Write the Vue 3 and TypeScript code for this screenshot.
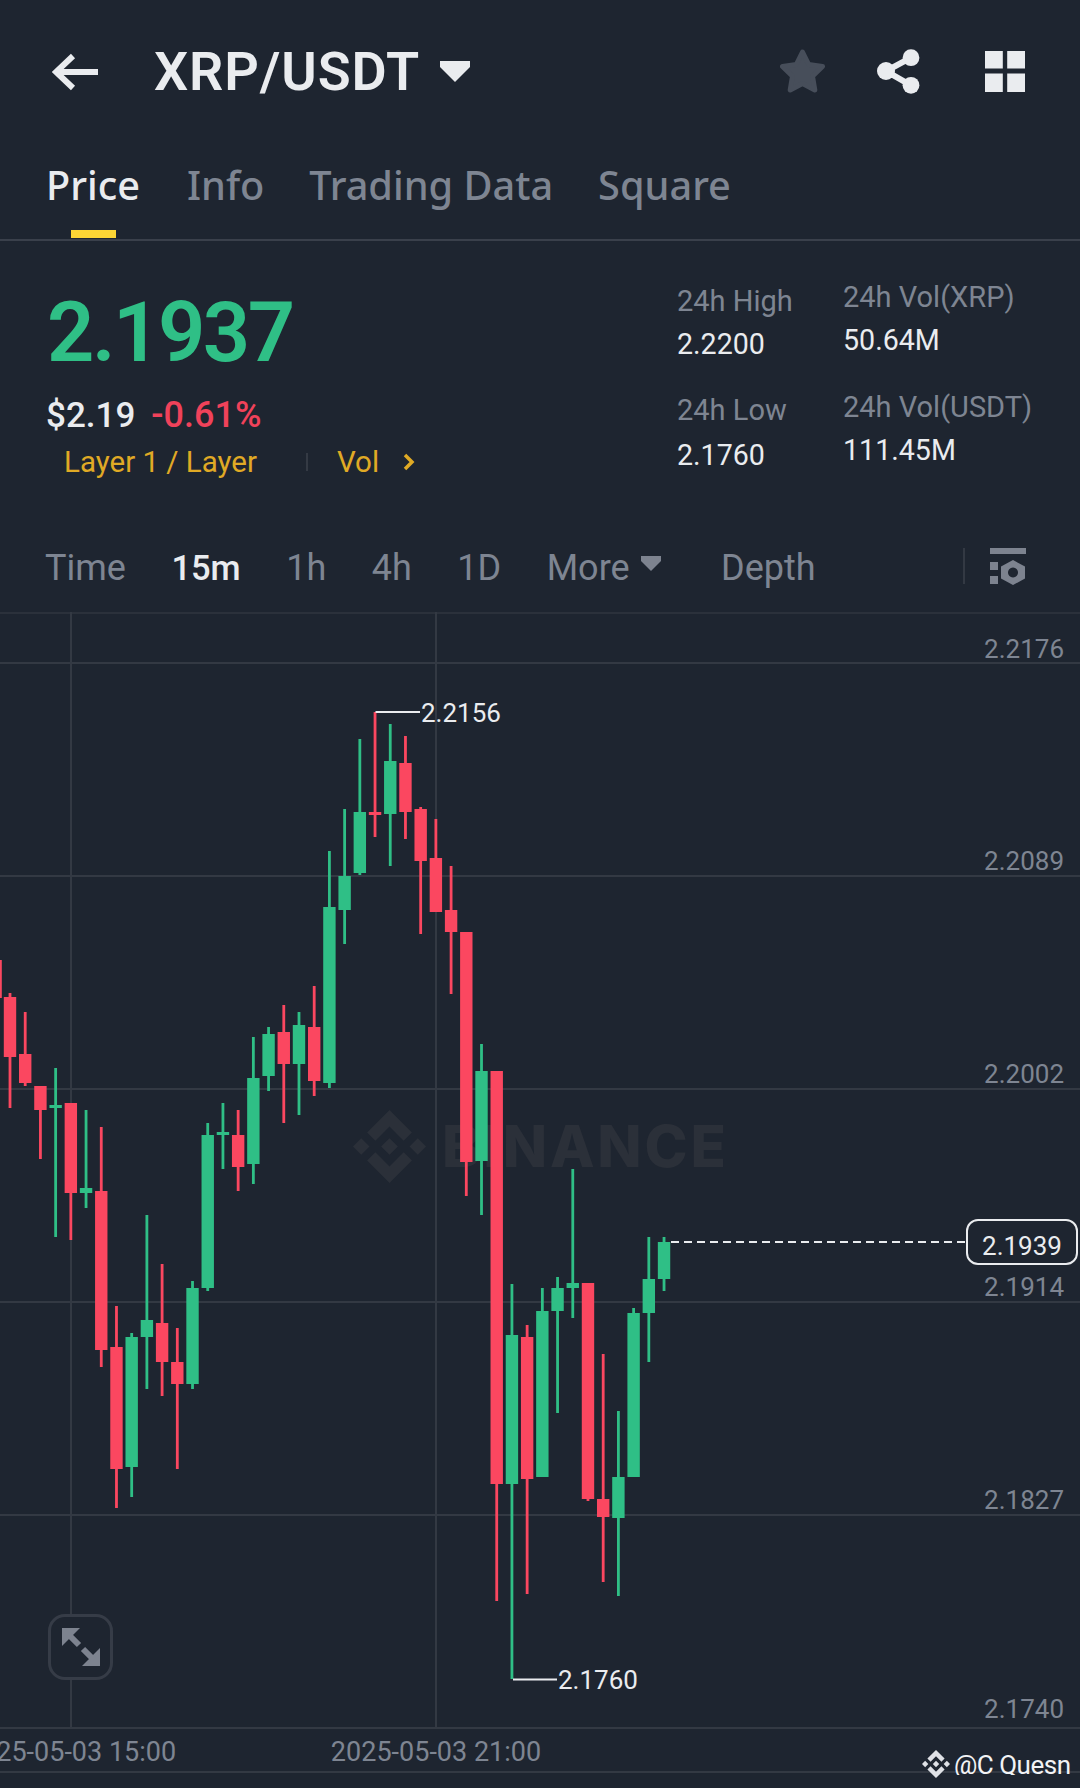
<script setup lang="ts">
type Candle = [number, number, number, number, number];

const GREEN = '#2fbf86';
const RED = '#fb4760';
const STEP = 15.21;
const TOP = 612;

// colour flag (1 green, 0 red), wick top, body top, body bottom, wick bottom
const raw: Candle[] = [
  [0, 993, 997, 1057, 1108], [0, 1012, 1054, 1083, 1086], [0, 1086, 1086, 1110, 1159],
  [1, 1068, 1105, 1108, 1237], [0, 1103, 1103, 1193, 1240], [1, 1110, 1188, 1193, 1208],
  [0, 1127, 1191, 1350, 1367], [0, 1306, 1347, 1469, 1508], [1, 1333, 1337, 1467, 1497],
  [1, 1215, 1320, 1337, 1389], [0, 1264, 1323, 1362, 1396], [0, 1328, 1362, 1384, 1469],
  [1, 1281, 1288, 1384, 1389], [1, 1123, 1135, 1288, 1291], [1, 1103, 1132, 1135, 1169],
  [0, 1110, 1135, 1167, 1191], [1, 1037, 1078, 1164, 1184], [1, 1027, 1034, 1076, 1091],
  [0, 1005, 1032, 1064, 1123], [1, 1012, 1025, 1064, 1115], [0, 986, 1027, 1081, 1096],
  [1, 851, 907, 1083, 1088], [1, 809, 876, 910, 944], [1, 739, 812, 873, 875],
  [0, 712, 812, 815, 837], [1, 724, 761, 814, 866], [0, 736, 763, 812, 839],
  [0, 807, 809, 861, 934], [0, 819, 858, 912, 912], [0, 866, 910, 932, 994],
  [0, 932, 932, 1162, 1196], [1, 1044, 1071, 1161, 1215], [0, 1071, 1071, 1484, 1601],
  [1, 1284, 1335, 1484, 1679], [0, 1325, 1337, 1479, 1594], [1, 1288, 1311, 1477, 1477],
  [1, 1277, 1288, 1311, 1413], [1, 1169, 1283, 1288, 1318], [0, 1283, 1283, 1499, 1501],
  [0, 1354, 1499, 1517, 1582], [1, 1411, 1477, 1518, 1596], [1, 1308, 1313, 1477, 1477],
  [1, 1237, 1279, 1313, 1362], [1, 1237, 1242, 1279, 1291],
];

const candles = raw.map((c, i) => ({
  x: 10 + STEP * i,
  color: c[0] ? GREEN : RED,
  wickTop: c[1],
  bodyTop: c[2],
  bodyHeight: c[3] - c[2],
  wickHeight: c[4] - c[1],
}));

const gridY = [663, 876, 1089, 1302, 1515];
const gridX = [71, 436];

const axisLabels = [
  { text: '2.2176', y: 648 },
  { text: '2.2089', y: 860 },
  { text: '2.2002', y: 1073 },
  { text: '2.1914', y: 1286 },
  { text: '2.1827', y: 1499 },
  { text: '2.1740', y: 1708 },
].map((l) => ({ text: l.text, top: l.y - TOP - 17 }));

const dates = [
  { text: '2025-05-03 15:00', x: 71 },
  { text: '2025-05-03 21:00', x: 436 },
];

const intervals = ['1h', '4h', '1D'];
const tabs = ['Info', 'Trading Data', 'Square'];
const logoPath =
  'M38.73 53.2l24.59-24.58 24.6 24.6 14.3-14.31L63.32 0 24.43 38.9l14.3 14.3zM0 63.31l14.3-14.31 14.31 14.31-14.31 14.3zM38.73 73.41l24.59 24.59 24.6-24.6 14.31 14.29-38.9 38.91-38.91-38.88v-.03l14.31-14.28zM98.03 63.31l14.3-14.3 14.3 14.3-14.3 14.3zM77.83 63.3h.01L63.32 48.78 52.59 59.51l-1.23 1.23-2.54 2.54v.02l14.5 14.52 14.51-14.52.01-.01z';
</script>

<template>
  <div class="page">
    <header class="topbar">
      <svg class="back" width="47" height="38" viewBox="0 0 47 38" fill="none" stroke="#eaecef" stroke-width="6">
        <path d="M46 19H5M21 3L4 19l17 16" />
      </svg>
      <h1 class="pair">XRP/USDT</h1>
      <svg class="pair-caret" width="30" height="21" viewBox="0 0 30 21"><path d="M0 0h30v6L15 21 0 6z" fill="#eaecef" /></svg>
      <svg class="star" width="45" height="46" viewBox="0 0 45 46">
        <path d="M22.500 4l6.200 12.500 13.800 2-10 9.700L34.800 42l-12.300-6.500L10.200 42l2.300-13.800-10-9.700 13.800-2z" fill="#474e5a" stroke="#474e5a" stroke-width="5" stroke-linejoin="round" />
      </svg>
      <svg class="share" width="43" height="45" viewBox="0 0 43 45" fill="#eaecef" stroke="#eaecef">
        <path d="M34 8.700L9 22l25 14.300" fill="none" stroke-width="6" />
        <circle cx="34" cy="8.700" r="8.400" stroke="none" />
        <circle cx="9" cy="22" r="9" stroke="none" />
        <circle cx="34" cy="36.300" r="8.400" stroke="none" />
      </svg>
      <svg class="grid-icon" width="40" height="41" viewBox="0 0 40 41" fill="#eaecef">
        <rect x="0" y="0" width="17.800" height="17.500" />
        <rect x="22.200" y="0" width="17.800" height="17.500" />
        <rect x="0" y="22.500" width="17.800" height="18.500" />
        <rect x="22.200" y="22.500" width="17.800" height="18.500" />
      </svg>
    </header>

    <nav class="tabs">
      <span class="tab tab-active">Price</span>
      <span v-for="t in tabs" :key="t" class="tab">{{ t }}</span>
    </nav>

    <section class="summary">
      <div class="price-col">
        <div class="price">2.1937</div>
        <div class="sub">
          <span class="usd">$2.19</span>
          <span class="change">-0.61%</span>
        </div>
        <div class="tags">
          <span>Layer 1 / Layer</span>
          <i class="tag-sep"></i>
          <span>Vol</span>
          <svg class="tag-chevron" width="12" height="18" viewBox="0 0 12 18" fill="none" stroke="#e0aa25" stroke-width="3.5">
            <path d="M2 2l7 7-7 7" />
          </svg>
        </div>
      </div>
      <div class="stat-col stat-left">
        <div class="stat-label">24h High</div>
        <div class="stat-value">2.2200</div>
        <div class="stat-label stat-next">24h Low</div>
        <div class="stat-value stat-value-low">2.1760</div>
      </div>
      <div class="stat-col stat-right">
        <div class="stat-label">24h Vol(XRP)</div>
        <div class="stat-value">50.64M</div>
        <div class="stat-label stat-next-right">24h Vol(USDT)</div>
        <div class="stat-value">111.45M</div>
      </div>
    </section>

    <section class="intervals">
      <span>Time</span>
      <span class="interval-active">15m</span>
      <span v-for="i in intervals" :key="i">{{ i }}</span>
      <span class="more">
        More
        <svg width="20" height="15" viewBox="0 0 20 15"><path d="M0 0h20v5L10 15 0 5z" fill="#7d838f" /></svg>
      </span>
      <span class="depth">Depth</span>
      <i class="interval-sep"></i>
      <svg class="settings" width="36" height="37" viewBox="0 0 36 37" fill="#7d838f">
        <rect x="0" y="0" width="36" height="6" />
        <rect x="0" y="14" width="8" height="8" />
        <rect x="0" y="28" width="8" height="8" />
        <path fill-rule="evenodd" d="M23 12l12 6.500v12L23 37l-12-6.500v-12zM23 19.500a5 5 0 1 0 .01 0z" />
      </svg>
    </section>

    <section class="chart">
      <div class="mark">
        <svg class="mark-logo" width="73" height="73" viewBox="0 0 126.61 126.61"><path :d="logoPath" fill="#2b3039" /></svg>
        <span class="mark-text">BINANCE</span>
      </div>

      <svg class="plot" width="1080" height="1115" viewBox="0 612 1080 1115">
        <line v-for="y in gridY" :key="'h' + y" x1="0" x2="1080" :y1="y" :y2="y" stroke="#333943" stroke-width="2" />
        <line v-for="x in gridX" :key="'v' + x" :x1="x" :x2="x" y1="612" y2="1727" stroke="#333943" stroke-width="2" />
        <rect x="-1" y="960" width="2.800" height="38" :fill="RED" />
        <g v-for="(c, i) in candles" :key="i">
          <rect :x="c.x - 1.4" :y="c.wickTop" width="2.800" :height="c.wickHeight" :fill="c.color" />
          <rect :x="c.x - 6.2" :y="c.bodyTop" width="12.400" :height="c.bodyHeight" :fill="c.color" />
        </g>
        <path d="M375.500 712H420M513 1679.500h44" stroke="#eaecef" stroke-width="2" fill="none" />
        <line x1="671" x2="967" y1="1242" y2="1242" stroke="#eaecef" stroke-width="2" stroke-dasharray="8 5" />
      </svg>

      <span class="note note-high">2.2156</span>
      <span class="note note-low">2.1760</span>

      <span v-for="l in axisLabels" :key="l.text" class="axis-label" :style="{ top: l.top + 'px' }">{{ l.text }}</span>
      <span class="last-price">2.1939</span>

      <button class="expand" type="button" aria-label="Expand">
        <svg width="38" height="38" viewBox="0 0 38 38" fill="#7d838f" stroke="none">
          <path d="M0 0h18L0 18z" />
          <path d="M38 38H20l18-18z" />
          <path d="M6 6l11 11M32 32L21 21" fill="none" stroke="#7d838f" stroke-width="6" />
        </svg>
      </button>
    </section>

    <section class="time-axis">
      <span v-for="d in dates" :key="d.x" class="date" :style="{ left: d.x + 'px' }">{{ d.text }}</span>
      <div class="credit">
        <svg width="28" height="28" viewBox="0 0 126.61 126.61"><path :d="logoPath" fill="#dfe1e6" /></svg>
        <span class="credit-text">@C Quesn</span>
      </div>
    </section>
  </div>
</template>

<style scoped>
.page {
  position: relative;
  width: 1080px;
  height: 1788px;
  overflow: hidden;
  background: #1e2530;
  font-family: Roboto, "Noto Sans", sans-serif;
  color: #eaecef;
}

.topbar {
  display: flex;
  align-items: center;
  height: 144px;
  padding-left: 52px;
}
.back { margin-right: 55px; }
.pair {
  margin: 0;
  font-size: 54px;
  font-weight: 600;
  line-height: 60px;
  letter-spacing: 0.9px;
}
.pair-caret { margin-left: 20px; margin-top: -2px; }
.star { margin-left: auto; margin-top: -2px; }
.share { margin-left: 52px; margin-top: -2px; }
.grid-icon { margin-left: 65px; margin-right: 55px; margin-top: -2px; }

.tabs {
  display: flex;
  gap: 45px;
  height: 97px;
  padding-left: 46px;
  box-sizing: border-box;
  border-bottom: 2px solid #3a404b;
  font-family: "Noto Sans", Roboto, sans-serif;
  font-size: 39.700px;
  font-weight: 500;
}
.tab {
  position: relative;
  height: 82px;
  line-height: 82px;
  color: #7e8592;
}
.tab-active { color: #eaecef; margin-right: 2px; }
.tab-active::after {
  content: "";
  position: absolute;
  left: 25px;
  bottom: -12px;
  width: 45px;
  height: 8px;
  background: #fcd535;
}

.summary {
  display: flex;
  height: 289px;
}
.price-col {
  flex: 1;
  padding: 40px 0 0 47px;
}
.price {
  font-size: 83px;
  font-weight: 600;
  line-height: 104px;
  color: #2fbf86;
  letter-spacing: -2.5px;
}
.sub {
  display: flex;
  gap: 16px;
  align-items: center;
  margin-top: 10px;
  margin-left: -1px;
  height: 40px;
  font-size: 35px;
  font-weight: 500;
}
.change { color: #f0425a; font-size: 36px; font-weight: 500; }
.tags {
  display: flex;
  align-items: center;
  margin-top: 9px;
  height: 36px;
  padding-left: 17px;
  color: #e0aa25;
  font-size: 29.500px;
}
.tag-sep {
  width: 2px;
  height: 18px;
  margin: 0 29px 0 49px;
  background: #343a44;
}
.tag-chevron { margin-left: 24px; }

.stat-col { font-size: 29px; }
.stat-left { width: 166px; padding-top: 42px; }
.stat-right { width: 237px; padding-top: 38px; }
.stat-label { height: 36px; line-height: 36px; color: #7e8592; }
.stat-value { height: 36px; line-height: 36px; margin-top: 7px; color: #eaecef; font-size: 28.600px; }
.stat-next { margin-top: 30px; }
.stat-next-right { margin-top: 31px; }
.stat-value-low { margin-top: 9px; }

.intervals {
  display: flex;
  align-items: center;
  gap: 45.500px;
  height: 82px;
  box-sizing: border-box;
  padding: 0 0 6px 45px;
  font-size: 36px;
  color: #7e8592;
}
.interval-active { color: #eaecef; font-size: 34.500px; font-weight: 500; }
.more { display: flex; align-items: center; gap: 11px; }
.more svg { margin-top: -10px; }
.depth { margin-left: 15px; }
.interval-sep {
  width: 2px;
  height: 36px;
  margin-left: auto;
  margin-top: -4px;
  margin-right: -20.500px;
  background: #333943;
}
.settings { margin-right: 54px; margin-top: -4px; }

.chart {
  position: relative;
  height: 1115px;
  box-sizing: border-box;
  border-top: 2px solid #2b313b;
}
.plot { position: absolute; left: 0; top: -2px; }
.mark {
  position: absolute;
  left: 353px;
  top: 496px;
  display: flex;
  align-items: center;
  gap: 16px;
}
.mark-text {
  font-family: Inter, Roboto, sans-serif;
  font-size: 58px;
  font-weight: 800;
  line-height: 73px;
  letter-spacing: 2.800px;
  color: #2b3039;
}
.note {
  position: absolute;
  font-size: 26px;
  line-height: 32px;
  color: #eaecef;
}
.note-high { left: 421px; top: 83px; }
.note-low { left: 558px; top: 1050px; }
.axis-label {
  position: absolute;
  right: 16px;
  font-size: 26px;
  line-height: 32px;
  color: #7e8592;
}
.last-price {
  position: absolute;
  left: 966px;
  top: 605px;
  width: 112px;
  height: 46px;
  box-sizing: border-box;
  border: 2px solid #eaecef;
  border-radius: 12px;
  background: #1e2530;
  text-align: center;
  font-size: 26px;
  line-height: 50px;
}
.expand {
  position: absolute;
  left: 48px;
  top: 1000px;
  display: flex;
  align-items: center;
  justify-content: center;
  width: 65px;
  height: 66px;
  padding: 0;
  box-sizing: border-box;
  background: #1e2530;
  border: 3px solid #363c47;
  border-radius: 17px;
}

.time-axis {
  position: relative;
  height: 46px;
  box-sizing: border-box;
  border-top: 2px solid #333943;
  border-bottom: 2px solid #333943;
}
.date {
  position: absolute;
  top: 5px;
  transform: translateX(-50%);
  font-size: 27px;
  line-height: 36px;
  color: #7e8592;
  white-space: nowrap;
}
.credit {
  position: absolute;
  left: 922px;
  top: 21px;
  display: flex;
  align-items: flex-start;
  gap: 4px;
  color: #f2f3f5;
}
.credit-text {
  display: block;
  height: 25px;
  overflow: hidden;
  font-size: 26px;
  line-height: 31px;
  letter-spacing: -0.5px;
  white-space: nowrap;
}
</style>

<style>
html, body { margin: 0; background: #1e2530; }
</style>
